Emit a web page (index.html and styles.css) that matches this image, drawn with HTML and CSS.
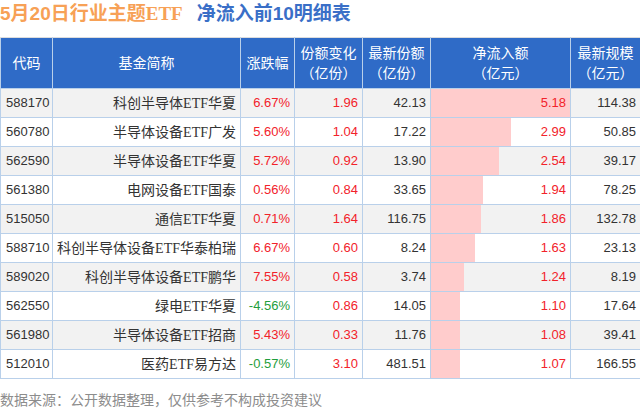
FILE: index.html
```html
<!DOCTYPE html>
<html lang="zh">
<head>
<meta charset="utf-8">
<link rel="stylesheet" href="styles.css">
</head>
<body>
<div class="page">
  <h1 class="title"><span class="t-orange">5月20日行业主题<span class="lat">ETF</span></span><span class="t-blue">净流入前10明细表</span></h1>
  <table class="grid">
    <colgroup>
      <col class="c1"><col class="c2"><col class="c3"><col class="c4"><col class="c5"><col class="c6"><col class="c7">
    </colgroup>
    <thead>
      <tr>
        <th>代码</th>
        <th>基金简称</th>
        <th>涨跌幅</th>
        <th>份额变化<br>（亿份）</th>
        <th>最新份额<br>（亿份）</th>
        <th>净流入额<br>（亿元）</th>
        <th>最新规模<br>（亿元）</th>
      </tr>
    </thead>
    <tbody>
      <tr><td class="code">588170</td><td class="name">科创半导体<span class="lat">ETF</span>华夏</td><td class="up">6.67%</td><td class="up">1.96</td><td>42.13</td><td class="up bar" style="--w:100%">5.18</td><td>114.38</td></tr>
      <tr><td class="code">560780</td><td class="name">半导体设备<span class="lat">ETF</span>广发</td><td class="up">5.60%</td><td class="up">1.04</td><td>17.22</td><td class="up bar" style="--w:57.7%">2.99</td><td>50.85</td></tr>
      <tr><td class="code">562590</td><td class="name">半导体设备<span class="lat">ETF</span>华夏</td><td class="up">5.72%</td><td class="up">0.92</td><td>13.90</td><td class="up bar" style="--w:49.0%">2.54</td><td>39.17</td></tr>
      <tr><td class="code">561380</td><td class="name">电网设备<span class="lat">ETF</span>国泰</td><td class="up">0.56%</td><td class="up">0.84</td><td>33.65</td><td class="up bar" style="--w:37.5%">1.94</td><td>78.25</td></tr>
      <tr><td class="code">515050</td><td class="name">通信<span class="lat">ETF</span>华夏</td><td class="up">0.71%</td><td class="up">1.64</td><td>116.75</td><td class="up bar" style="--w:35.9%">1.86</td><td>132.78</td></tr>
      <tr><td class="code">588710</td><td class="name">科创半导体设备<span class="lat">ETF</span>华泰柏瑞</td><td class="up">6.67%</td><td class="up">0.60</td><td>8.24</td><td class="up bar" style="--w:31.5%">1.63</td><td>23.13</td></tr>
      <tr><td class="code">589020</td><td class="name">科创半导体设备<span class="lat">ETF</span>鹏华</td><td class="up">7.55%</td><td class="up">0.58</td><td>3.74</td><td class="up bar" style="--w:23.9%">1.24</td><td>8.19</td></tr>
      <tr><td class="code">562550</td><td class="name">绿电<span class="lat">ETF</span>华夏</td><td class="down">-4.56%</td><td class="up">0.86</td><td>14.05</td><td class="up bar" style="--w:21.2%">1.10</td><td>17.64</td></tr>
      <tr><td class="code">561980</td><td class="name">半导体设备<span class="lat">ETF</span>招商</td><td class="up">5.43%</td><td class="up">0.33</td><td>11.76</td><td class="up bar" style="--w:20.9%">1.08</td><td>39.41</td></tr>
      <tr><td class="code">512010</td><td class="name">医药<span class="lat">ETF</span>易方达</td><td class="down">-0.57%</td><td class="up">3.10</td><td>481.51</td><td class="up bar" style="--w:20.7%">1.07</td><td>166.55</td></tr>
    </tbody>
  </table>
  <p class="source">数据来源：公开数据整理，仅供参考不构成投资建议</p>
</div>
</body>
</html>
```

FILE: styles.css
```css
html, body {
  margin: 0;
  padding: 0;
  background: #ffffff;
}

.page {
  width: 640px;
  height: 410px;
  overflow: hidden;
  font-family: "Liberation Sans", "Noto Sans CJK SC", sans-serif;
  color: #333333;
}

.lat {
  font-family: "Liberation Serif", serif;
}

.title {
  margin: 0;
  height: 37px;
  padding-top: 2px;
  box-sizing: border-box;
  font-size: 19px;
  line-height: 24px;
  font-weight: bold;
  white-space: nowrap;
}

.t-orange {
  color: #f7a156;
  margin-right: 14px;
}

.t-blue {
  color: #3a6fc7;
}

.grid {
  width: 640px;
  border-collapse: collapse;
  table-layout: fixed;
  font-size: 13px;
}

.c1 { width: 52px; }
.c2 { width: 188px; }
.c3 { width: 54px; }
.c4 { width: 68px; }
.c5 { width: 68px; }
.c6 { width: 140px; }
.c7 { width: 70px; }

.grid th {
  background: #2f6bc7;
  color: #ffffff;
  font-weight: normal;
  font-size: 14px;
  line-height: 20px;
  height: 50px;
  padding: 0 2px;
  border: 1px solid #b9d0ea;
  border-top-color: #dddddd;
  text-align: center;
  white-space: nowrap;
}

.grid td {
  height: 28px;
  padding: 0 4px 0 3px;
  border: 1px solid #b9d0ea;
  text-align: right;
  white-space: nowrap;
  line-height: 20px;
}

.grid tbody tr:nth-child(odd) td {
  background-color: #f2f2f2;
}

.grid tbody tr:nth-child(even) td {
  background-color: #ffffff;
}

.grid td.code {
  text-align: left;
  padding-left: 5px;
}

.grid td.name {
  font-size: 14px;
}

.up { color: #f2222a; }
.down { color: #1f9e3c; }

.grid td.bar {
  background-image: linear-gradient(to right, #ffcccc var(--w), transparent var(--w));
  background-repeat: no-repeat;
}

.source {
  margin: 0;
  padding-top: 12px;
  font-size: 14px;
  line-height: 18px;
  color: #8c8c8c;
  white-space: nowrap;
}
```
